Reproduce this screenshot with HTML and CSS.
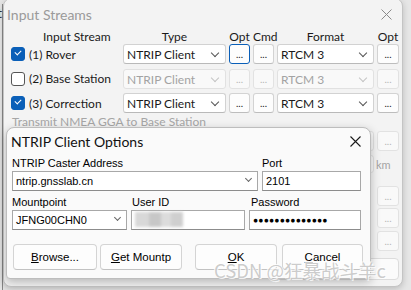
FILE: index.html
```html
<!DOCTYPE html>
<html lang="en">
<head>
  <meta charset="UTF-8">
  <title>Input Streams</title>
  <link rel="stylesheet" href="styles.css">
</head>
<body>

  <!-- okno za wszystkim -->
  <div class="behind">t</div>

  <!-- Input Streams -->
  <div class="window">
    <div class="titlebar">
      <span class="title">Input Streams</span>
      <svg class="close" width="11" height="11" viewBox="0 0 11 11"><path d="M0.5 0.5L10.5 10.5M10.5 0.5L0.5 10.5" stroke="#8a8a8a" stroke-width="1"/></svg>
    </div>

    <div class="streams head">
      <div class="h-stream">Input Stream</div>
      <div>Type</div>
      <div>Opt</div>
      <div>Cmd</div>
      <div>Format</div>
      <div>Opt</div>
    </div>

    <div class="streams rows">
      <label class="stream"><span class="check on"></span>(1) Rover</label>
      <div class="combo">NTRIP Client<span class="chev"></span></div>
      <button class="dots focus">...</button>
      <button class="dots">...</button>
      <div class="combo">RTCM 3<span class="chev"></span></div>
      <button class="dots">...</button>

      <label class="stream"><span class="check"></span>(2) Base Station</label>
      <div class="combo off">NTRIP Client<span class="chev"></span></div>
      <button class="dots off">...</button>
      <button class="dots off">...</button>
      <div class="combo off">RTCM 3<span class="chev"></span></div>
      <button class="dots off">...</button>

      <label class="stream"><span class="check on"></span>(3) Correction</label>
      <div class="combo">NTRIP Client<span class="chev"></span></div>
      <button class="dots">...</button>
      <button class="dots">...</button>
      <div class="combo">RTCM 3<span class="chev"></span></div>
      <button class="dots">...</button>
    </div>

    <div class="transmit">Transmit NMEA GGA to Base Station</div>

    <!-- reszta okna, prawie cala pod dialogiem -->
    <div class="streams more">
      <div class="combo off col5 r1"></div>
      <button class="dots off col6 r1">...</button>
      <div class="field col5 r2"></div>
      <div class="unit col6 r2">km</div>
      <button class="dots off col6 r3">...</button>
      <button class="dots off col6 r4">...</button>
      <button class="dots off col6 r5">...</button>
      <button class="bigbtn r6"></button>
    </div>
  </div>

  <!-- NTRIP Client Options -->
  <div class="dialog">
    <div class="d-titlebar">
      <span class="d-title">NTRIP Client Options</span>
      <svg class="close" width="11" height="11" viewBox="0 0 11 11"><path d="M0.5 0.5L10.5 10.5M10.5 0.5L0.5 10.5" stroke="#1a1a1a" stroke-width="1.1"/></svg>
    </div>

    <div class="d-row labels">
      <div class="w-addr">NTRIP Caster Address</div>
      <div class="w-port">Port</div>
    </div>
    <div class="d-row">
      <div class="box w-addr">ntrip.gnsslab.cn<span class="chev small"></span></div>
      <div class="box w-port">2101</div>
    </div>

    <div class="d-row labels">
      <div class="w-mount">Mountpoint</div>
      <div class="w-user">User ID</div>
      <div class="w-pass">Password</div>
    </div>
    <div class="d-row">
      <div class="box w-mount">JFNG00CHN0<span class="chev small"></span></div>
      <div class="box w-user"><span class="blur"></span></div>
      <div class="box w-pass"><span class="pw">●●●●●●●●●●●●●●</span></div>
    </div>

    <div class="d-buttons">
      <button class="btn b-browse"><u>B</u>rowse...</button>
      <button class="btn b-get"><u>G</u>et Mountp</button>
      <button class="btn b-ok"><u>O</u>K</button>
      <button class="btn b-cancel"><u>C</u>ancel</button>
    </div>
  </div>

  <div class="watermark">CSDN @狂暴战斗羊c</div>

</body>
</html>
```

FILE: styles.css
```css
body {
  margin: 0;
  width: 411px;
  height: 290px;
  overflow: hidden;
  position: relative;
  background: #e6e6e6;
  font-family: Lato, "Liberation Sans", sans-serif;
  font-size: 12px;
  color: #1a1a1a;
}
button {
  font-family: inherit;
  padding: 0;
}

.behind {
  position: absolute;
  left: -3px;
  top: 4px;
  font-size: 14px;
  color: #333;
  border-right: 1px solid #888;
  height: 290px;
}

/* glowne okno */
.window {
  position: absolute;
  left: 3px;
  top: -2px;
  width: 398px;
  height: 287px;
  background: #f3f3f3;
  border: 1px solid #c4c4c4;
  border-radius: 8px;
  box-shadow: 0 2px 6px rgba(0, 0, 0, 0.18);
}
.titlebar {
  height: 31px;
  display: flex;
  align-items: center;
  justify-content: space-between;
  padding: 0 10px 0 3px;
}
.title {
  font-size: 14px;
  color: #9a9a9a;
}

.streams {
  display: grid;
  grid-template-columns: 109px 103px 21px 21px 97px 22px;
  column-gap: 3px;
  margin-left: 7px;
}
.head {
  height: 14px;
  line-height: 14px;
  text-align: center;
}
.head .h-stream {
  text-align: left;
  padding-left: 32px;
}
.rows {
  grid-auto-rows: 20px;
  row-gap: 4.5px;
}
.stream {
  display: flex;
  align-items: center;
  gap: 4px;
  white-space: nowrap;
}
.check {
  width: 12px;
  height: 12px;
  border: 1px solid #555;
  border-radius: 3px;
  background: #fff;
  position: relative;
}
.check.on {
  background: #0a5fb8;
  border-color: #0a5fb8;
}
.check.on::after {
  content: "";
  position: absolute;
  left: 3px;
  top: 2px;
  width: 5px;
  height: 3px;
  border-left: 1.2px solid #fff;
  border-bottom: 1.2px solid #fff;
  transform: rotate(-45deg);
}

.combo {
  position: relative;
  height: 20px;
  line-height: 20px;
  box-sizing: border-box;
  padding-left: 3px;
  background: #fff;
  border: 1px solid #d2d2d2;
  border-bottom-color: #b9b9b9;
  border-radius: 3px;
  white-space: nowrap;
}
.combo.off {
  background: #f9f9f9;
  color: #a3a3a3;
  border-color: #e1e1e1;
}
.chev {
  position: absolute;
  right: 7px;
  top: 5px;
  width: 5px;
  height: 5px;
  border-right: 1px solid #555;
  border-bottom: 1px solid #555;
  transform: rotate(45deg);
}
.off .chev {
  border-color: #c4c4c4;
}
.chev.small {
  right: 6px;
  top: 4px;
  width: 4px;
  height: 4px;
  border-color: #666;
}

.dots {
  height: 20px;
  box-sizing: border-box;
  background: #fdfdfd;
  border: 1px solid #d3d3d3;
  border-bottom-color: #bdbdbd;
  border-radius: 3px;
  font-size: 10px;
  line-height: 14px;
  color: #222;
}
.dots.focus {
  border: 1.5px solid #0a5fb8;
}
.dots.off {
  color: #b5b5b5;
  background: #f9f9f9;
  border-color: #e2e2e2;
}

.transmit {
  margin: 3px 0 0 8px;
  color: #a6a6a6;
  height: 12px;
  line-height: 12px;
}

.more {
  grid-template-rows: 20px 22px 20px 20px 20px 22px;
  margin-top: 3px;
}
.col5 { grid-column: 5; }
.col6 { grid-column: 6; }
.r1 { grid-row: 1; }
.r2 { grid-row: 2; margin-top: 4px; }
.r3 { grid-row: 3; margin-top: 13px; }
.r4 { grid-row: 4; margin-top: 15px; }
.r5 { grid-row: 5; margin-top: 18px; }
.r6 { grid-row: 6; margin-top: 25px; }
.field {
  background: #f9f9f9;
  border: 1px solid #e1e1e1;
  border-radius: 3px;
}
.unit {
  color: #a3a3a3;
  font-size: 11px;
  line-height: 20px;
  margin-left: -1px;
}
.bigbtn {
  grid-column: 5 / span 2;
  height: 22px;
  background: #fbfbfb;
  border: 1px solid #dcdcdc;
  border-radius: 4px;
}

/* dialog */
.dialog {
  position: absolute;
  left: 6px;
  top: 127px;
  width: 363px;
  height: 150px;
  background: #fafafa;
  border: 1px solid #bdbdbd;
  border-radius: 8px 8px 4px 4px;
  box-shadow: 0 3px 10px rgba(0, 0, 0, 0.25);
  font-family: "Liberation Sans", Arial, sans-serif;
  font-size: 11px;
  color: #000;
}
.d-titlebar {
  height: 27px;
  display: flex;
  align-items: center;
  justify-content: space-between;
  padding: 0 9px 0 4px;
}
.d-title {
  font-family: Lato, sans-serif;
  font-size: 14px;
  color: #111;
}
.d-row {
  display: flex;
  gap: 4px;
  margin-left: 5px;
}
.labels {
  height: 15px;
  line-height: 14px;
  margin-top: 1px;
}
.w-addr { width: 246px; }
.w-port { width: 99px; }
.w-mount { width: 115px; }
.w-user { width: 114px; }
.w-pass { width: 112px; }
.labels .w-user { padding-left: 1px; }
.labels .w-pass { padding-left: 1px; }
.box {
  position: relative;
  height: 20px;
  line-height: 19px;
  box-sizing: border-box;
  padding-left: 3px;
  background: #fff;
  border: 1px solid #a8a8a8;
  border-bottom-color: #8c8c8c;
}
.d-row + .labels {
  margin-top: 4px;
}
.blur {
  display: block;
  margin-top: 1px;
  width: 48px;
  height: 15px;
  background: linear-gradient(90deg, #d8d8d8 0 30%, #c7c7c7 30% 55%, #dcdcdc 55% 75%, #cfcfcf 75%);
  filter: blur(1.5px);
}
.pw {
  font-size: 8.5px;
  letter-spacing: 0.2px;
  vertical-align: 1px;
  color: #000;
}

.d-buttons {
  display: flex;
  margin: 14px 0 0 6px;
}
.btn {
  height: 26px;
  background: #fdfdfd;
  border: 1px solid #d4d4d4;
  border-bottom-color: #c2c2c2;
  border-radius: 4px;
  font-family: "Liberation Sans", Arial, sans-serif;
  font-size: 11.5px;
  color: #000;
}
.b-browse { width: 84px; }
.b-get { width: 82px; margin-left: 3px; }
.b-ok { width: 82px; margin-left: 13px; }
.b-cancel { width: 81px; margin-left: 5px; }

.watermark {
  position: absolute;
  left: 214px;
  top: 259px;
  font-family: "Noto Sans CJK SC", "Noto Sans", sans-serif;
  font-size: 18.5px;
  line-height: 22px;
  color: rgba(160, 160, 160, 0.55);
  text-shadow: 0 0 1px #fff, 1px 1px 0 rgba(255, 255, 255, 0.8), -1px -1px 0 rgba(255, 255, 255, 0.8);
  white-space: nowrap;
}
```
